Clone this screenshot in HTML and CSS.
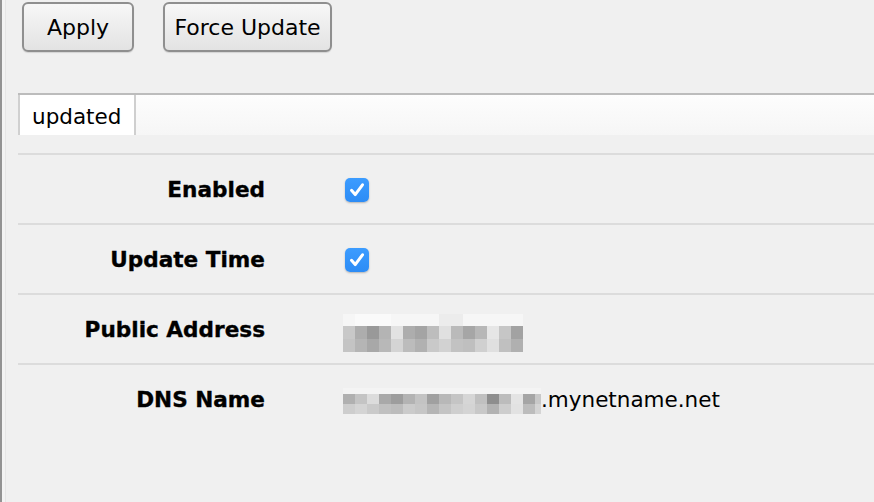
FILE: index.html
```html
<!DOCTYPE html>
<html>
<head>
<meta charset="utf-8">
<link rel="stylesheet" href="styles.css">
</head>
<body>
<div class="page">
  <div class="toolbar">
    <button class="btn btn-apply">Apply</button>
    <button class="btn btn-force">Force Update</button>
  </div>
  <div class="tabs">
    <div class="tab">updated</div>
    <div class="tab-fill"></div>
  </div>
  <div class="form">
    <div class="row">
      <div class="label">Enabled</div>
      <div class="value"><span class="check"><svg viewBox="0 0 24 24" width="24" height="24"><path d="M6.5 12.3 L10.2 16.6 L17.5 6.8" fill="none" stroke="#fff" stroke-width="3" stroke-linecap="round" stroke-linejoin="round"/></svg></span></div>
    </div>
    <div class="row">
      <div class="label">Update Time</div>
      <div class="value"><span class="check"><svg viewBox="0 0 24 24" width="24" height="24"><path d="M6.5 12.3 L10.2 16.6 L17.5 6.8" fill="none" stroke="#fff" stroke-width="3" stroke-linecap="round" stroke-linejoin="round"/></svg></span></div>
    </div>
    <div class="row">
      <div class="label">Public Address</div>
      <div class="value">
        <svg class="mosaic-ip" width="180" height="38" viewBox="0 0 180 38" shape-rendering="crispEdges">
          <rect x="0" y="0" width="180" height="12" fill="#f6f6f6"/>
          <rect x="12" y="0" width="36" height="12" fill="#fafafa"/>
          <rect x="96" y="0" width="24" height="12" fill="#ececec"/>
          <rect x="0" y="12" width="12" height="13" fill="#c8c8c8"/>
          <rect x="12" y="12" width="12" height="13" fill="#adadad"/>
          <rect x="24" y="12" width="12" height="13" fill="#999"/>
          <rect x="36" y="12" width="12" height="13" fill="#b4b4b4"/>
          <rect x="48" y="12" width="12" height="13" fill="#e2e2e2"/>
          <rect x="60" y="12" width="12" height="13" fill="#adadad"/>
          <rect x="72" y="12" width="12" height="13" fill="#a4a4a4"/>
          <rect x="84" y="12" width="12" height="13" fill="#bdbdbd"/>
          <rect x="96" y="12" width="12" height="13" fill="#e0e0e0"/>
          <rect x="108" y="12" width="12" height="13" fill="#bababa"/>
          <rect x="120" y="12" width="12" height="13" fill="#a6a6a6"/>
          <rect x="132" y="12" width="12" height="13" fill="#b7b7b7"/>
          <rect x="144" y="12" width="12" height="13" fill="#e6e6e6"/>
          <rect x="156" y="12" width="12" height="13" fill="#c6c6c6"/>
          <rect x="168" y="12" width="12" height="13" fill="#a2a2a2"/>
          <rect x="0" y="25" width="12" height="13" fill="#c4c4c4"/>
          <rect x="12" y="25" width="12" height="13" fill="#b5b5b5"/>
          <rect x="24" y="25" width="12" height="13" fill="#a8a8a8"/>
          <rect x="36" y="25" width="12" height="13" fill="#b8b8b8"/>
          <rect x="48" y="25" width="12" height="13" fill="#d4d4d4"/>
          <rect x="60" y="25" width="12" height="13" fill="#bcbcbc"/>
          <rect x="72" y="25" width="12" height="13" fill="#b1b1b1"/>
          <rect x="84" y="25" width="12" height="13" fill="#c9c9c9"/>
          <rect x="96" y="25" width="12" height="13" fill="#d2d2d2"/>
          <rect x="108" y="25" width="12" height="13" fill="#c2c2c2"/>
          <rect x="120" y="25" width="12" height="13" fill="#bfbfbf"/>
          <rect x="132" y="25" width="12" height="13" fill="#d0d0d0"/>
          <rect x="144" y="25" width="12" height="13" fill="#e0e0e0"/>
          <rect x="156" y="25" width="12" height="13" fill="#c0c0c0"/>
          <rect x="168" y="25" width="12" height="13" fill="#b0b0b0"/>
        </svg>
      </div>
    </div>
    <div class="row row-last">
      <div class="label">DNS Name</div>
      <div class="value">
        <svg class="mosaic-dns" width="198" height="26" viewBox="0 0 198 26" shape-rendering="crispEdges">
          <rect x="0" y="0" width="198" height="6" fill="#f4f4f4"/>
          <rect x="0" y="6" width="12" height="10" fill="#b0b0b0"/>
          <rect x="12" y="6" width="12" height="10" fill="#c4c4c4"/>
          <rect x="24" y="6" width="12" height="10" fill="#dcdcdc"/>
          <rect x="36" y="6" width="12" height="10" fill="#a9a9a9"/>
          <rect x="48" y="6" width="12" height="10" fill="#9d9d9d"/>
          <rect x="60" y="6" width="12" height="10" fill="#b3b3b3"/>
          <rect x="72" y="6" width="12" height="10" fill="#c3c3c3"/>
          <rect x="84" y="6" width="12" height="10" fill="#a0a0a0"/>
          <rect x="96" y="6" width="12" height="10" fill="#b8b8b8"/>
          <rect x="108" y="6" width="12" height="10" fill="#c5c5c5"/>
          <rect x="120" y="6" width="12" height="10" fill="#d6d6d6"/>
          <rect x="132" y="6" width="12" height="10" fill="#c0c0c0"/>
          <rect x="144" y="6" width="12" height="10" fill="#8e8e8e"/>
          <rect x="156" y="6" width="12" height="10" fill="#bcbcbc"/>
          <rect x="168" y="6" width="12" height="10" fill="#e4e4e4"/>
          <rect x="180" y="6" width="12" height="10" fill="#a5a5a5"/>
          <rect x="192" y="6" width="6" height="10" fill="#c8c8c8"/>
          <rect x="0" y="16" width="12" height="10" fill="#cdcdcd"/>
          <rect x="12" y="16" width="12" height="10" fill="#d4d4d4"/>
          <rect x="24" y="16" width="12" height="10" fill="#cacaca"/>
          <rect x="36" y="16" width="12" height="10" fill="#c0c0c0"/>
          <rect x="48" y="16" width="12" height="10" fill="#bcbcbc"/>
          <rect x="60" y="16" width="12" height="10" fill="#cbcbcb"/>
          <rect x="72" y="16" width="12" height="10" fill="#c6c6c6"/>
          <rect x="84" y="16" width="12" height="10" fill="#b5b5b5"/>
          <rect x="96" y="16" width="12" height="10" fill="#c4c4c4"/>
          <rect x="108" y="16" width="12" height="10" fill="#cfcfcf"/>
          <rect x="120" y="16" width="12" height="10" fill="#d4d4d4"/>
          <rect x="132" y="16" width="12" height="10" fill="#c8c8c8"/>
          <rect x="144" y="16" width="12" height="10" fill="#b2b2b2"/>
          <rect x="156" y="16" width="12" height="10" fill="#cdcdcd"/>
          <rect x="168" y="16" width="12" height="10" fill="#e2e2e2"/>
          <rect x="180" y="16" width="12" height="10" fill="#bcbcbc"/>
          <rect x="192" y="16" width="6" height="10" fill="#d4d4d4"/>
        </svg><span class="domain">.mynetname.net</span>
      </div>
    </div>
  </div>
</div>
</body>
</html>
```

FILE: styles.css
```css
html, body {
  margin: 0;
  padding: 0;
  height: 100%;
  background: #f0f0f0;
}
body {
  font-family: "DejaVu Sans", Verdana, sans-serif;
  color: #000;
  overflow: hidden;
}
.page {
  height: 100%;
  border-left: 2px solid #939393;
  box-shadow: inset 3px 0 0 #f3f3f3, inset 4px 0 0 #e6e6e6;
  box-sizing: border-box;
}
.toolbar {
  display: flex;
  gap: 29px;
  padding: 2px 0 0 20px;
}
.btn {
  height: 50px;
  box-sizing: border-box;
  border: 2px solid #8f8f8f;
  border-radius: 6px;
  background: linear-gradient(#f7f7f7, #e3e3e3);
  box-shadow: 0 1px 1px rgba(0,0,0,0.12);
  font-family: "DejaVu Sans", Verdana, sans-serif;
  font-size: 22px;
  color: #000;
  padding: 0;
}
.btn-apply { width: 112px; }
.btn-force { width: 169px; }
.tabs {
  display: flex;
  margin: 41px 0 0 16px;
  height: 42px;
  box-sizing: border-box;
  border-top: 2px solid #bcbcbc;
  background: linear-gradient(#fdfdfd, #f6f6f6);
}
.tab {
  width: 118px;
  box-sizing: border-box;
  border-left: 2px solid #d0d0d0;
  border-right: 2px solid #cfcfcf;
  font-size: 21.5px;
  line-height: 38px;
  padding-left: 12px;
  padding-top: 3px;
  background: #fff;
}
.tab-fill {
  flex: 1;
}
.form {
  margin: 18px 0 0 16px;
}
.row {
  display: flex;
  align-items: center;
  height: 70px;
  box-sizing: border-box;
  border-top: 2px solid #dcdcdc;
}
.label {
  width: 247px;
  text-align: right;
  font-weight: bold;
  font-size: 21.6px;
  -webkit-text-stroke: 0.35px #000;
  padding-top: 1px;
}
.value {
  display: flex;
  align-items: center;
  margin-left: 78px;
  font-size: 21.5px;
}
.check {
  display: block;
  width: 24px;
  height: 24px;
  margin-left: 2px;
  border-radius: 5px;
  background: linear-gradient(#3c9cff, #2d8cf5);
  box-shadow: 0 1px 2px rgba(0,0,0,0.25);
  margin-top: 2px;
}
.check svg { display: block; }
.mosaic-ip { display: block; margin-top: 8px; }
.mosaic-dns { display: block; margin-top: 4px; }
.domain { margin-left: 0; }
```
